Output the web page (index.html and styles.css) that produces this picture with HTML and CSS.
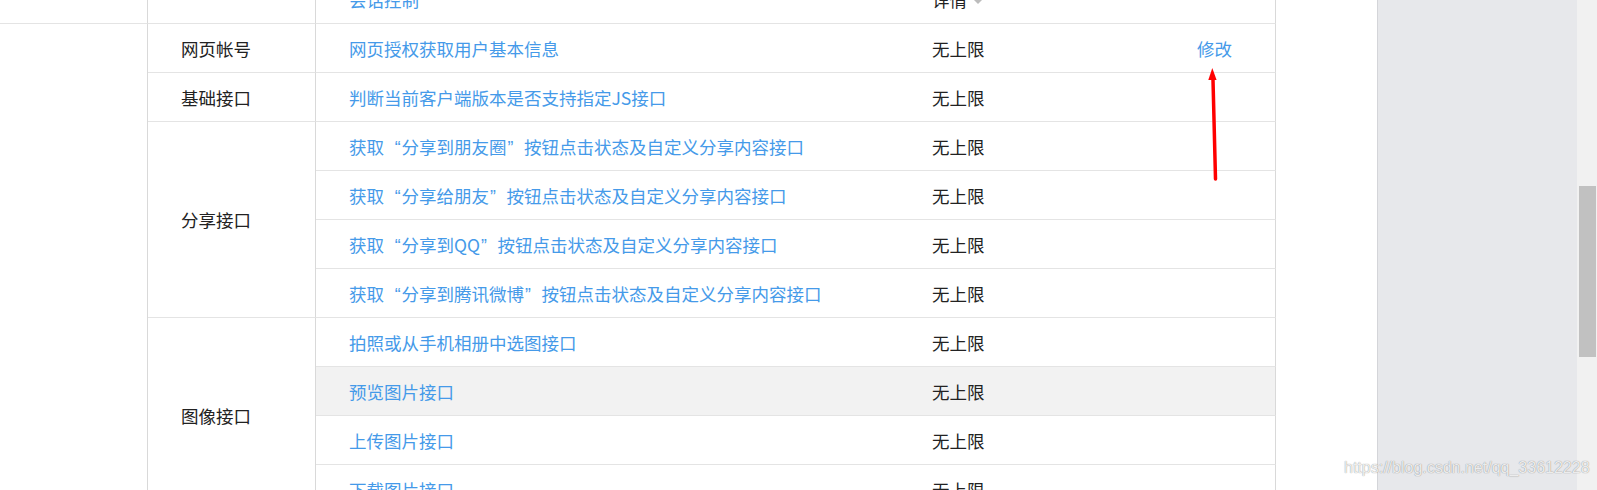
FILE: index.html
```html
<!DOCTYPE html>
<html lang="zh-CN">
<head>
<meta charset="utf-8">
<title>接口权限</title>
<link rel="stylesheet" href="styles.css">
</head>
<body>
<div class="page">
  <div class="main">
    <div class="tbl">
      <div class="cat cat-prev"></div>
      <div class="cat cat-web"></div>

      <div class="feat feat-prev"></div>
      <div class="row"><span class="name">会话控制</span><span class="limit">详情<span class="caret"></span></span><span class="op"></span></div>

      <div class="feat">网页帐号</div>
      <div class="row"><span class="name">网页授权获取用户基本信息</span><span class="limit">无上限</span><span class="op">修改</span></div>

      <div class="feat">基础接口</div>
      <div class="row"><span class="name">判断当前客户端版本是否支持指定JS接口</span><span class="limit">无上限</span><span class="op"></span></div>

      <div class="feat span4">分享接口</div>
      <div class="row"><span class="name">获取<span class="ql">“</span>分享到朋友圈<span class="qr">”</span>按钮点击状态及自定义分享内容接口</span><span class="limit">无上限</span><span class="op"></span></div>
      <div class="row"><span class="name">获取<span class="ql">“</span>分享给朋友<span class="qr">”</span>按钮点击状态及自定义分享内容接口</span><span class="limit">无上限</span><span class="op"></span></div>
      <div class="row"><span class="name">获取<span class="ql">“</span>分享到QQ<span class="qr">”</span>按钮点击状态及自定义分享内容接口</span><span class="limit">无上限</span><span class="op"></span></div>
      <div class="row"><span class="name">获取<span class="ql">“</span>分享到腾讯微博<span class="qr">”</span>按钮点击状态及自定义分享内容接口</span><span class="limit">无上限</span><span class="op"></span></div>

      <div class="feat span4">图像接口</div>
      <div class="row"><span class="name">拍照或从手机相册中选图接口</span><span class="limit">无上限</span><span class="op"></span></div>
      <div class="row hover"><span class="name">预览图片接口</span><span class="limit">无上限</span><span class="op"></span></div>
      <div class="row"><span class="name">上传图片接口</span><span class="limit">无上限</span><span class="op"></span></div>
      <div class="row"><span class="name">下载图片接口</span><span class="limit">无上限</span><span class="op"></span></div>
    </div>
    <svg class="arrow" width="20" height="120" viewBox="0 0 20 120" aria-hidden="true">
      <line x1="9" y1="14" x2="11.5" y2="113" stroke="#ff0000" stroke-width="3.5" stroke-linecap="round"/>
      <polygon points="8.3,2 4.3,14 12.6,14" fill="#ff0000"/>
    </svg>
  </div>
  <div class="side"></div>
  <div class="scroll"><div class="thumb"></div></div>
  <div class="mark">https://blog.csdn.net/qq_33612228</div>
</div>
</body>
</html>
```

FILE: styles.css
```css
html, body {
  margin: 0;
  padding: 0;
  height: 490px;
  overflow: hidden;
  background: #fff;
}

.page {
  position: relative;
  display: flex;
  height: 490px;
  font-family: "Noto Sans CJK SC", "Microsoft YaHei", sans-serif;
  font-size: 17.5px;
  color: #222;
}

.main {
  position: relative;
  width: 1377px;
  flex: none;
  overflow: hidden;
  background: #fff;
}

.tbl {
  display: grid;
  grid-template-columns: 148px 168px 960px;
  grid-auto-rows: 49px;
  margin-top: -25px;
  width: 1276px;
}

.cat {
  grid-column: 1;
  border-right: 1px solid #d9d9d9;
  border-bottom: 1px solid #e4e4e4;
  box-sizing: border-box;
}
.cat-prev { grid-row: 1; }
.cat-web { grid-row: 2 / span 12; }

.feat {
  grid-column: 2;
  display: flex;
  align-items: center;
  padding-left: 33px;
  box-sizing: border-box;
  border-right: 1px solid #d9d9d9;
  border-bottom: 1px solid #e4e4e4;
  color: #222;
}
.span4 { grid-row: span 4; }

.row {
  grid-column: 3;
  display: flex;
  align-items: center;
  box-sizing: border-box;
  border-right: 1px solid #d9d9d9;
  border-bottom: 1px solid #e4e4e4;
}
.row.hover { background: #f2f2f2; }

.name {
  width: 616px;
  padding-left: 33px;
  box-sizing: border-box;
  color: #459ae9;
  white-space: nowrap;
}
.ql, .qr {
  display: inline-block;
  width: 17.5px;
  box-sizing: border-box;
  font-family: "Liberation Sans", sans-serif;
}
.ql { text-align: right; padding-right: 1px; }
.qr { text-align: left; padding-left: 1px; }
.limit {
  width: 265px;
  color: #222;
  white-space: nowrap;
}
.op {
  color: #459ae9;
}

.caret {
  display: inline-block;
  margin-left: 6px;
  vertical-align: middle;
  width: 0;
  height: 0;
  border-left: 5px solid transparent;
  border-right: 5px solid transparent;
  border-top: 5px solid #bcbcbc;
}

.arrow {
  position: absolute;
  left: 1204px;
  top: 66px;
}

.side {
  width: 200px;
  flex: none;
  box-sizing: border-box;
  background: #e7e8eb;
  border-left: 1px solid #d4d5d9;
}

.scroll {
  flex: 1;
  background: #f1f1f1;
  position: relative;
}
.thumb {
  position: absolute;
  left: 2px;
  right: 1px;
  top: 186px;
  height: 171px;
  background: #c1c1c1;
}

.mark {
  position: absolute;
  left: 1344px;
  top: 459px;
  font-family: "Liberation Sans", Arial, sans-serif;
  font-size: 16px;
  color: rgba(255, 255, 255, 0.85);
  text-shadow: 0 0 1px rgba(0, 0, 0, 0.35), 0 0 1px rgba(0, 0, 0, 0.2);
  white-space: nowrap;
}
```
